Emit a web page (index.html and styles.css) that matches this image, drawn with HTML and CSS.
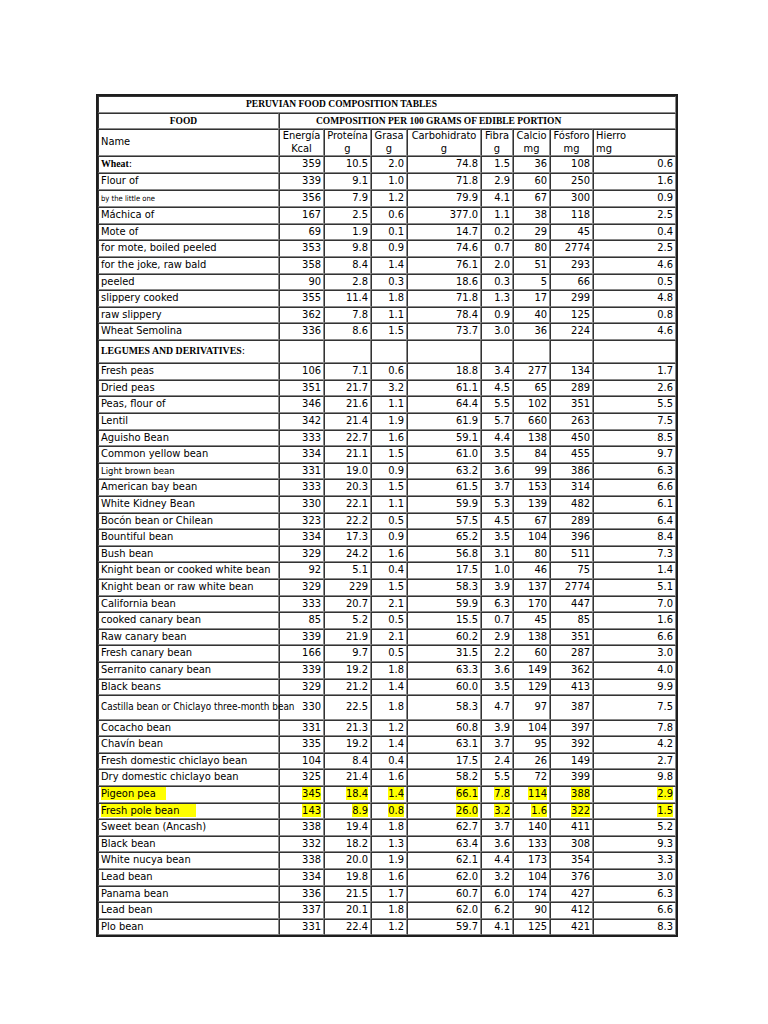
FILE: index.html
```html
<!DOCTYPE html>
<html>
<head>
<meta charset="utf-8">
<link rel="stylesheet" href="styles.css">
</head>
<body>
<table class="food">
<colgroup>
<col class="c-name"><col class="c-en"><col class="c-pr"><col class="c-gr"><col class="c-ca"><col class="c-fi"><col class="c-cal"><col class="c-fo"><col class="c-hi">
</colgroup>
<tr class="r-title"><td colspan="9" class="title">PERUVIAN FOOD COMPOSITION TABLES</td></tr>
<tr class="r-title"><td class="title food-h">FOOD</td><td colspan="8" class="title comp-h">COMPOSITION PER 100 GRAMS OF EDIBLE PORTION</td></tr>
<tr class="r-head">
<td class="name-h">Name</td>
<td class="ch">Energía<br>Kcal</td>
<td class="ch">Proteína<br>g</td>
<td class="ch">Grasa<br>g</td>
<td class="ch">Carbohidrato<br>g</td>
<td class="ch">Fibra<br>g</td>
<td class="ch">Calcio<br>mg</td>
<td class="ch">Fósforo<br>mg</td>
<td class="ch left">Hierro<br>mg</td>
</tr>
<tr><td><span class="serif-b">Wheat</span>:</td><td>359</td><td>10.5</td><td>2.0</td><td>74.8</td><td>1.5</td><td>36</td><td>108</td><td>0.6</td></tr>
<tr><td>Flour of</td><td>339</td><td>9.1</td><td>1.0</td><td>71.8</td><td>2.9</td><td>60</td><td>250</td><td>1.6</td></tr>
<tr><td><span class="tiny">by the little one</span></td><td>356</td><td>7.9</td><td>1.2</td><td>79.9</td><td>4.1</td><td>67</td><td>300</td><td>0.9</td></tr>
<tr><td>Máchica of</td><td>167</td><td>2.5</td><td>0.6</td><td>377.0</td><td>1.1</td><td>38</td><td>118</td><td>2.5</td></tr>
<tr><td>Mote of</td><td>69</td><td>1.9</td><td>0.1</td><td>14.7</td><td>0.2</td><td>29</td><td>45</td><td>0.4</td></tr>
<tr><td>for mote, boiled peeled</td><td>353</td><td>9.8</td><td>0.9</td><td>74.6</td><td>0.7</td><td>80</td><td>2774</td><td>2.5</td></tr>
<tr><td>for the joke, raw bald</td><td>358</td><td>8.4</td><td>1.4</td><td>76.1</td><td>2.0</td><td>51</td><td>293</td><td>4.6</td></tr>
<tr><td>peeled</td><td>90</td><td>2.8</td><td>0.3</td><td>18.6</td><td>0.3</td><td>5</td><td>66</td><td>0.5</td></tr>
<tr><td>slippery cooked</td><td>355</td><td>11.4</td><td>1.8</td><td>71.8</td><td>1.3</td><td>17</td><td>299</td><td>4.8</td></tr>
<tr><td>raw slippery</td><td>362</td><td>7.8</td><td>1.1</td><td>78.4</td><td>0.9</td><td>40</td><td>125</td><td>0.8</td></tr>
<tr><td>Wheat Semolina</td><td>336</td><td>8.6</td><td>1.5</td><td>73.7</td><td>3.0</td><td>36</td><td>224</td><td>4.6</td></tr>
<tr class="r-sect"><td><span class="serif-b">LEGUMES AND DERIVATIVES</span>:</td><td></td><td></td><td></td><td></td><td></td><td></td><td></td><td></td></tr>
<tr><td>Fresh peas</td><td>106</td><td>7.1</td><td>0.6</td><td>18.8</td><td>3.4</td><td>277</td><td>134</td><td>1.7</td></tr>
<tr><td>Dried peas</td><td>351</td><td>21.7</td><td>3.2</td><td>61.1</td><td>4.5</td><td>65</td><td>289</td><td>2.6</td></tr>
<tr><td>Peas, flour of</td><td>346</td><td>21.6</td><td>1.1</td><td>64.4</td><td>5.5</td><td>102</td><td>351</td><td>5.5</td></tr>
<tr><td>Lentil</td><td>342</td><td>21.4</td><td>1.9</td><td>61.9</td><td>5.7</td><td>660</td><td>263</td><td>7.5</td></tr>
<tr><td>Aguisho Bean</td><td>333</td><td>22.7</td><td>1.6</td><td>59.1</td><td>4.4</td><td>138</td><td>450</td><td>8.5</td></tr>
<tr><td>Common yellow bean</td><td>334</td><td>21.1</td><td>1.5</td><td>61.0</td><td>3.5</td><td>84</td><td>455</td><td>9.7</td></tr>
<tr><td><span class="small">Light brown bean</span></td><td>331</td><td>19.0</td><td>0.9</td><td>63.2</td><td>3.6</td><td>99</td><td>386</td><td>6.3</td></tr>
<tr><td>American bay bean</td><td>333</td><td>20.3</td><td>1.5</td><td>61.5</td><td>3.7</td><td>153</td><td>314</td><td>6.6</td></tr>
<tr><td>White Kidney Bean</td><td>330</td><td>22.1</td><td>1.1</td><td>59.9</td><td>5.3</td><td>139</td><td>482</td><td>6.1</td></tr>
<tr><td>Bocón bean or Chilean</td><td>323</td><td>22.2</td><td>0.5</td><td>57.5</td><td>4.5</td><td>67</td><td>289</td><td>6.4</td></tr>
<tr><td>Bountiful bean</td><td>334</td><td>17.3</td><td>0.9</td><td>65.2</td><td>3.5</td><td>104</td><td>396</td><td>8.4</td></tr>
<tr><td>Bush bean</td><td>329</td><td>24.2</td><td>1.6</td><td>56.8</td><td>3.1</td><td>80</td><td>511</td><td>7.3</td></tr>
<tr><td>Knight bean or cooked white bean</td><td>92</td><td>5.1</td><td>0.4</td><td>17.5</td><td>1.0</td><td>46</td><td>75</td><td>1.4</td></tr>
<tr><td>Knight bean or raw white bean</td><td>329</td><td>229</td><td>1.5</td><td>58.3</td><td>3.9</td><td>137</td><td>2774</td><td>5.1</td></tr>
<tr><td>California bean</td><td>333</td><td>20.7</td><td>2.1</td><td>59.9</td><td>6.3</td><td>170</td><td>447</td><td>7.0</td></tr>
<tr><td>cooked canary bean</td><td>85</td><td>5.2</td><td>0.5</td><td>15.5</td><td>0.7</td><td>45</td><td>85</td><td>1.6</td></tr>
<tr><td>Raw canary bean</td><td>339</td><td>21.9</td><td>2.1</td><td>60.2</td><td>2.9</td><td>138</td><td>351</td><td>6.6</td></tr>
<tr><td>Fresh canary bean</td><td>166</td><td>9.7</td><td>0.5</td><td>31.5</td><td>2.2</td><td>60</td><td>287</td><td>3.0</td></tr>
<tr><td>Serranito canary bean</td><td>339</td><td>19.2</td><td>1.8</td><td>63.3</td><td>3.6</td><td>149</td><td>362</td><td>4.0</td></tr>
<tr><td>Black beans</td><td>329</td><td>21.2</td><td>1.4</td><td>60.0</td><td>3.5</td><td>129</td><td>413</td><td>9.9</td></tr>
<tr class="r-tall"><td><span class="over">Castilla bean or Chiclayo three-month bean</span></td><td>330</td><td>22.5</td><td>1.8</td><td>58.3</td><td>4.7</td><td>97</td><td>387</td><td>7.5</td></tr>
<tr><td>Cocacho bean</td><td>331</td><td>21.3</td><td>1.2</td><td>60.8</td><td>3.9</td><td>104</td><td>397</td><td>7.8</td></tr>
<tr><td>Chavín bean</td><td>335</td><td>19.2</td><td>1.4</td><td>63.1</td><td>3.7</td><td>95</td><td>392</td><td>4.2</td></tr>
<tr><td>Fresh domestic chiclayo bean</td><td>104</td><td>8.4</td><td>0.4</td><td>17.5</td><td>2.4</td><td>26</td><td>149</td><td>2.7</td></tr>
<tr><td>Dry domestic chiclayo bean</td><td>325</td><td>21.4</td><td>1.6</td><td>58.2</td><td>5.5</td><td>72</td><td>399</td><td>9.8</td></tr>
<tr><td><span class="hl hl-pig">Pigeon pea</span></td><td><span class="hl">345</span></td><td><span class="hl">18.4</span></td><td><span class="hl">1.4</span></td><td><span class="hl">66.1</span></td><td><span class="hl">7.8</span></td><td><span class="hl">114</span></td><td><span class="hl">388</span></td><td><span class="hl">2.9</span></td></tr>
<tr><td><span class="hl hl-pole">Fresh pole bean</span></td><td><span class="hl">143</span></td><td><span class="hl">8.9</span></td><td><span class="hl">0.8</span></td><td><span class="hl">26.0</span></td><td><span class="hl">3.2</span></td><td><span class="hl">1.6</span></td><td><span class="hl">322</span></td><td><span class="hl">1.5</span></td></tr>
<tr><td>Sweet bean (Ancash)</td><td>338</td><td>19.4</td><td>1.8</td><td>62.7</td><td>3.7</td><td>140</td><td>411</td><td>5.2</td></tr>
<tr><td>Black bean</td><td>332</td><td>18.2</td><td>1.3</td><td>63.4</td><td>3.6</td><td>133</td><td>308</td><td>9.3</td></tr>
<tr><td>White nucya bean</td><td>338</td><td>20.0</td><td>1.9</td><td>62.1</td><td>4.4</td><td>173</td><td>354</td><td>3.3</td></tr>
<tr><td>Lead bean</td><td>334</td><td>19.8</td><td>1.6</td><td>62.0</td><td>3.2</td><td>104</td><td>376</td><td>3.0</td></tr>
<tr><td>Panama bean</td><td>336</td><td>21.5</td><td>1.7</td><td>60.7</td><td>6.0</td><td>174</td><td>427</td><td>6.3</td></tr>
<tr><td>Lead bean</td><td>337</td><td>20.1</td><td>1.8</td><td>62.0</td><td>6.2</td><td>90</td><td>412</td><td>6.6</td></tr>
<tr><td>Plo bean</td><td>331</td><td>22.4</td><td>1.2</td><td>59.7</td><td>4.1</td><td>125</td><td>421</td><td>8.3</td></tr>
</table>
</body>
</html>
```

FILE: styles.css
```css
html, body {
  margin: 0;
  padding: 0;
  background: #ffffff;
}

body {
  padding: 94px 0 0 96px;
  font-family: "DejaVu Sans Condensed", "DejaVu Sans", Verdana, sans-serif;
  font-stretch: condensed;
  color: #000;
}

.food {
  table-layout: fixed;
  width: 582px;
  border-collapse: separate;
  border-spacing: 0;
  border: 2px solid #1e1e1e;
  font-size: 11px;
  background: #fff;
}

.c-name { width: 181px; }
.c-en { width: 45px; }
.c-pr { width: 47px; }
.c-gr { width: 36px; }
.c-ca { width: 74px; }
.c-fi { width: 32px; }
.c-cal { width: 37px; }
.c-fo { width: 43px; }
.c-hi { width: 83px; }

.food td {
  box-sizing: border-box;
  border: 1px solid;
  border-color: #333333 #8a8a8a #8a8a8a #333333;
  padding: 0 2px 0 2px;
  line-height: 14.6px;
  height: 16.6px;
  text-align: right;
  white-space: nowrap;
  vertical-align: middle;
}

.food td:first-child {
  text-align: left;
  padding-left: 2px;
}

.food td.title {
  font-family: "Liberation Serif", "Times New Roman", serif;
  font-stretch: normal;
  font-weight: bold;
  font-size: 9.5px;
  text-align: left;
  padding-left: 147px;
}

.food td.food-h {
  text-align: center;
  padding-left: 0;
  padding-right: 10px;
}

.food td.comp-h {
  padding-left: 36px;
}

.food .r-head td {
  line-height: 12.6px;
  height: 27.2px;
  text-align: center;
  padding: 0 1px;
}

.food .r-head td.name-h {
  text-align: left;
  padding-left: 2px;
}

.food .r-head td.left {
  text-align: left;
  padding-left: 2px;
}

.serif-b {
  font-family: "Liberation Serif", "Times New Roman", serif;
  font-stretch: normal;
  font-weight: bold;
  font-size: 9.8px;
}

.food .r-sect td {
  height: 23.4px;
}

.food .r-tall td {
  height: 24.4px;
}

.food td .over {
  font-size: 9.9px;
  position: relative;
  z-index: 1;
}

.tiny {
  font-size: 7.6px;
}

.small {
  font-size: 9.4px;
}

.hl {
  background: #ffff00;
}

.hl-pig {
  padding-right: 10px;
}

.hl-pole {
  padding-right: 17px;
}
```
